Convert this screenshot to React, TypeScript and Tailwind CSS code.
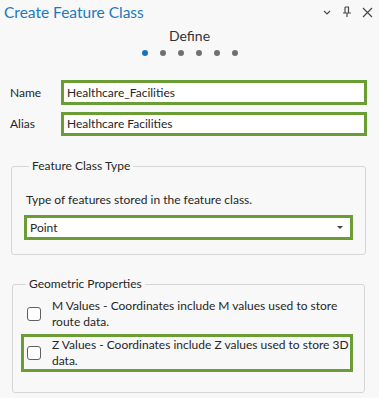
import React from "react";

const Checkbox = () => (
  <span className="h-[14px] w-[14px] shrink-0 rounded-[3px] border border-[#5f5f5f] bg-white" />
);

const App: React.FC = () => {
  const dots = [0, 1, 2, 3, 4, 5];

  return (
    <div className="h-[398px] w-[379px] overflow-hidden bg-[#f8f8f8] font-['Lato',sans-serif] text-[12px] text-[#262626]">
      {/* header */}
      <div className="flex h-[24px] items-center justify-between pl-[4px] pr-[6px]">
        <span className="text-[15.5px] leading-[20px] text-[#1d78bf]">Create Feature Class</span>
        <div className="flex items-center gap-[10px] text-[#4a4a4a]">
          <svg width="10" height="10" viewBox="0 0 10 10">
            <path d="M2 4 L5 7 L8 4" fill="none" stroke="currentColor" strokeWidth="1.2" />
          </svg>
          <svg width="10" height="12" viewBox="0 0 10 12">
            <path d="M3 1 H7 M3 1 V7 M6.5 1 V7 M1 7 H9 M5 7 V11" fill="none" stroke="currentColor" strokeWidth="1.2" />
          </svg>
          <svg width="11" height="11" viewBox="0 0 11 11">
            <path d="M1 1 L10 10 M10 1 L1 10" fill="none" stroke="currentColor" strokeWidth="1.2" />
          </svg>
        </div>
      </div>

      {/* step */}
      <div className="mt-[4px] text-center text-[14px] leading-[16px] text-[#333]">Define</div>
      <div className="mt-[6px] flex justify-center gap-[12px]">
        {dots.map((d) => (
          <span
            key={d}
            className={d === 0 ? "h-[6px] w-[6px] rounded-full bg-[#1a72bb]" : "h-[6px] w-[6px] rounded-full bg-[#707070]"}
          />
        ))}
      </div>

      {/* name / alias */}
      <div className="mt-[24px] flex flex-col gap-[7px] pl-[10px] pr-[12px]">
        <div className="flex items-center">
          <span className="w-[51px]">Name</span>
          <div className="flex h-[25px] flex-1 items-center border-[3px] border-[#6b9d35] bg-white pl-[3px]">
            Healthcare_Facilities
          </div>
        </div>
        <div className="flex items-center">
          <span className="w-[51px]">Alias</span>
          <div className="flex h-[24px] flex-1 items-center border-[3px] border-[#6b9d35] bg-white pl-[3px]">
            Healthcare Facilities
          </div>
        </div>
      </div>

      {/* feature class type */}
      <fieldset className="mx-[11px] mt-[22px] w-[354px] rounded-[3px] border border-[#d6d6d6] px-[12px] pb-[14px] pt-[18px]">
        <legend className="ml-[5px] px-[3px] leading-[16px]">Feature Class Type</legend>
        <div className="pl-[2px] leading-[16px]">Type of features stored in the feature class.</div>
        <div className="mt-[7px] flex h-[25px] w-[329px] items-center justify-between border-[3px] border-[#6b9d35] bg-white pl-[3px] pr-[7px]">
          <span>Point</span>
          <svg width="6" height="4" viewBox="0 0 6 4">
            <path d="M0 0 H6 L3 3 Z" fill="#444" />
          </svg>
        </div>
      </fieldset>

      {/* geometric properties */}
      <fieldset className="mx-[12px] mt-[21px] h-[117px] w-[353px] rounded-[3px] border border-[#d6d6d6] px-[8px] pt-[6px]">
        <legend className="ml-[5px] px-[3px] leading-[16px]">Geometric Properties</legend>
        <div className="flex items-center gap-[11px] pl-[6px] pr-[8px] leading-[16px]">
          <Checkbox />
          <span>M Values - Coordinates include M values used to store route data.</span>
        </div>
        <div className="mt-[4px] flex w-[332px] items-center gap-[11px] border-[3px] border-[#6b9d35] pl-[3px] leading-[16px]">
          <Checkbox />
          <span>Z Values - Coordinates include Z values used to store 3D data.</span>
        </div>
      </fieldset>
    </div>
  );
};

export default App;
